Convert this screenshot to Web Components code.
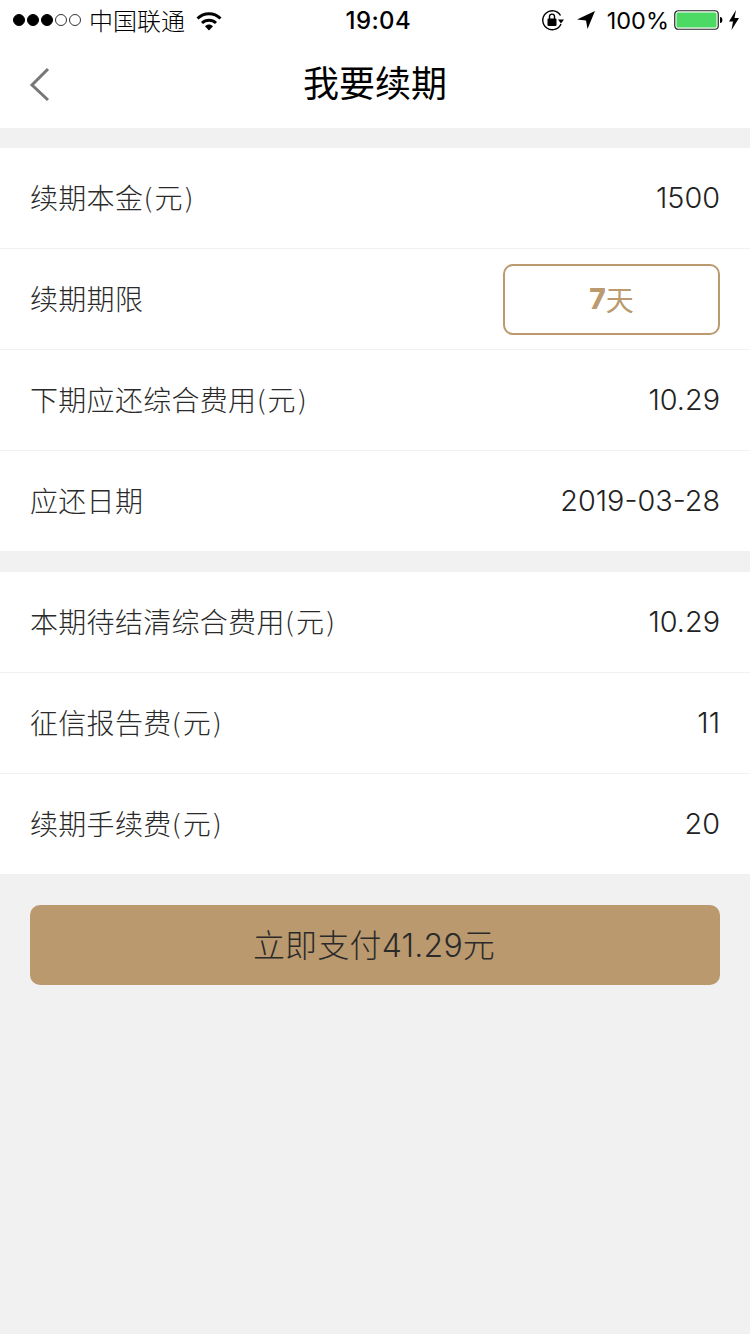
<!DOCTYPE html>
<html lang="zh-CN"><head><meta charset="utf-8">
<style>
html,body{margin:0;padding:0;background:#f1f1f1;font-family:"Noto Sans CJK SC","Inter",sans-serif}
b{font-weight:800}
</style></head><body>
<app-status></app-status>
<app-nav>我要续期</app-nav>
<app-group style="margin-top:20px">
  <app-row label="续期本金(元)" value="1500"></app-row>
  <app-row label="续期期限"><period-box><b>7</b>天</period-box></app-row>
  <app-row label="下期应还综合费用(元)" value="10.29"></app-row>
  <app-row label="应还日期" value="2019-03-28" last></app-row>
</app-group>
<app-group style="margin-top:21px">
  <app-row label="本期待结清综合费用(元)" value="10.29"></app-row>
  <app-row label="征信报告费(元)" value="11"></app-row>
  <app-row label="续期手续费(元)" value="20" last></app-row>
</app-group>
<pay-button>立即支付41.29元</pay-button>
<script>
function def(name,html,init){customElements.define(name,class extends HTMLElement{
  constructor(){super();this.attachShadow({mode:'open'}).innerHTML=html;}
  connectedCallback(){if(init)init(this);}
});}
const F='"Inter","Noto Sans CJK SC",sans-serif';
def('app-status',`<style>
:host{display:flex;align-items:center;height:40px;background:#fff;color:#000;font-family:${F};position:relative;padding:0 10px 0 13px;box-sizing:border-box}
.dots{display:flex;gap:2px}
.dots i{width:12px;height:12px;border-radius:50%;background:#000;box-sizing:border-box;border:1px solid #000}
.dots i.o{background:#fff;border-color:#333}
.car{font-size:24px;margin-left:8px;line-height:40px;font-family:"Noto Sans CJK SC",sans-serif;font-weight:300}
.wifi{margin-left:11px;margin-top:1px}
.time{flex:1;display:flex;justify-content:center;font-size:24px;font-weight:500;letter-spacing:.4px;margin-left:-6px;font-family:"Inter",sans-serif}
.r{display:flex;align-items:center}
.pct{font-size:23.500px;margin:0 5px 0 11px;font-family:"Inter",sans-serif;font-weight:400}
</style>
<div class="dots"><i></i><i></i><i></i><i class="o"></i><i class="o"></i></div>
<span class="car">中国联通</span>
<svg class="wifi" width="26" height="20" viewBox="0 0 26 20"><path d="M1.500 7.500C8 1.200 18 1.200 24.500 7.500" fill="none" stroke="#000" stroke-width="3"/><path d="M6 12C10 8.300 16 8.300 20 12" fill="none" stroke="#000" stroke-width="3"/><path d="M9 15.200C11.500 13 14.500 13 17 15.200L13 19.500Z" fill="#000"/></svg>
<div class="time">19:04</div>
<div class="r">
<svg width="24" height="24" viewBox="0 0 24 24"><path d="M19.500 7.500A9.500 9.500 0 1 0 20 16" fill="none" stroke="#000" stroke-width="1.400"/><path d="M17 11.500h6L20 15.500Z" fill="#000"/><rect x="6.500" y="10.500" width="9" height="7.500" rx="1" fill="#000"/><path d="M8.500 11V8.600a2.500 2.500 0 0 1 5 0V11" fill="none" stroke="#000" stroke-width="1.400"/></svg>
<svg style="margin-left:11px" width="20" height="20" viewBox="0 0 20 20"><path d="M19 1L1 9.500L10 10.500L11.500 19Z" fill="#000"/></svg>
<span class="pct">100%</span>
<svg width="50" height="20" viewBox="0 0 50 20"><rect x=".75" y=".75" width="43.500" height="18.500" rx="3.500" fill="#fff" stroke="#222" stroke-width="1.200"/><rect x="2.500" y="2.500" width="40" height="15" rx="1.500" fill="#4cd964"/><path d="M46 7c1.600 0 2.400 1 2.400 3S47.600 13 46 13Z" fill="#000"/></svg>
<svg style="margin-left:4px" width="12" height="20" viewBox="0 0 12 20"><path d="M8 0L1 11.500H5L3.500 20L11 8H6.500Z" fill="#000"/></svg>
</div>`);
def('app-nav',`<style>
:host{display:flex;align-items:center;justify-content:center;height:88px;box-sizing:border-box;padding-bottom:6px;background:#fff;position:relative;font-size:36px;color:#000;font-family:"Noto Sans CJK SC",sans-serif;font-weight:400}
svg{position:absolute;left:29px;top:27px}
</style><svg width="22" height="36" viewBox="0 0 22 36"><path d="M19 2L3 18L19 33" fill="none" stroke="#777" stroke-width="3"/></svg><slot></slot>`);
def('app-group',`<style>:host{display:block;background:#fff}</style><slot></slot>`);
def('app-row',`<style>
:host{display:flex;align-items:center;justify-content:space-between;height:101px;box-sizing:border-box;padding:0 30px;border-bottom:1px solid #f2f2f2;font-size:28px;color:#2a2a2a;font-family:${F}}
:host([last]){border-bottom:0;height:100px}
#l{font-family:"DejaVu Sans","Noto Sans CJK SC",sans-serif;font-weight:300;letter-spacing:.3px;padding-bottom:2px}
.v{font-size:28.800px;font-weight:300;color:#222}
.v.t{padding-bottom:2px}
</style><span id="l"></span><span class="v" id="w"><span id="v"></span><slot></slot></span>`,el=>{
  const s=el.shadowRoot,val=el.getAttribute('value')||'';
  s.getElementById('l').textContent=el.getAttribute('label')||'';
  s.getElementById('v').textContent=val;
  if(val)s.getElementById('w').classList.add('t');
});
def('period-box',`<style>
:host{display:flex;align-items:center;justify-content:center;width:217px;height:71px;box-sizing:border-box;border:2px solid #ba9a6e;border-radius:10px;color:#ba9a6e;font-size:28px;font-weight:400;font-family:${F}}
</style><slot></slot>`);
def('pay-button',`<style>
:host{display:flex;align-items:center;justify-content:center;height:80px;box-sizing:border-box;padding:0 2px 5px 0;margin:31px 30px 0;border-radius:10px;background:#ba996e;color:#2a2a2a;font-size:32px;font-weight:300;letter-spacing:.2px;font-family:${F}}
</style><slot></slot>`);
</script>
</body></html>
